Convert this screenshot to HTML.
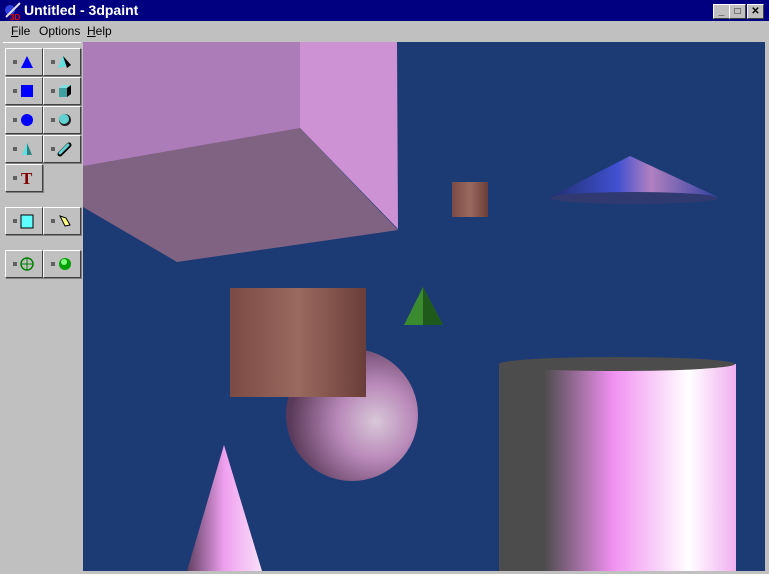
<!DOCTYPE html>
<html><head><style>
body{margin:0;width:769px;height:574px;overflow:hidden;background:#c0c0c0;font-family:"Liberation Sans",sans-serif;position:relative}
.title{position:absolute;left:0;top:0;width:769px;height:21px;background:#000080;color:#fff;font-weight:bold;font-size:14px}
.title span{position:absolute;left:24px;top:2px}
.wb{position:absolute;top:4px;width:15px;height:13px;background:#c0c0c0;border:1px solid;border-color:#fff #404040 #404040 #fff;font-size:10px;color:#000;text-align:center;line-height:13px;font-weight:bold}
.menu{position:absolute;top:21px;left:0;width:769px;height:20px;font-size:12px}
.menu span{position:absolute;top:3px}
.btn{position:absolute;width:36px;height:26px;border:1px solid;border-color:#fff #404040 #404040 #fff;box-shadow:1px 1px 0 #808080}
.btn i{position:absolute;left:7px;top:11px;width:4px;height:4px;background:#606060}
.btn svg{position:absolute;left:13px;top:4px}
</style></head><body>
<div class="title"><svg width="20" height="20" style="position:absolute;left:2px;top:1px"><circle cx="8" cy="9" r="5" fill="#3040e0"/><line x1="4" y1="16" x2="18" y2="2" stroke="#ddd" stroke-width="2"/><text x="8" y="19" font-size="8" fill="#e00" font-weight="bold">3D</text></svg><span>Untitled - 3dpaint</span>
<div class="wb" style="left:713px">_</div><div class="wb" style="left:729px">□</div><div class="wb" style="left:747px">✕</div></div>
<div class="menu"><span style="left:11px"><u>F</u>ile</span><span style="left:39px">Options</span><span style="left:87px"><u>H</u>elp</span></div>
<div style="position:absolute;left:3px;top:42px;width:78px;height:530px;border-top:1px solid #fff"></div>

<div class="btn" style="left:5px;top:48px"><i></i><svg width="20" height="20"><polygon points="8,3 14,15 2,15" fill="#0000ff"/></svg></div>
<div class="btn" style="left:43px;top:48px"><i></i><svg width="20" height="20"><polygon points="6,3 14,12 1,15" fill="#60e0e0"/><polygon points="6,3 14,12 10,15" fill="#000"/></svg></div>
<div class="btn" style="left:5px;top:77px"><i></i><svg width="20" height="20"><rect x="2" y="3" width="12" height="12" fill="#0000ff"/></svg></div>
<div class="btn" style="left:43px;top:77px"><i></i><svg width="20" height="20"><polygon points="2,6 10,6 10,15 2,15" fill="#40a0a0"/><polygon points="2,6 6,3 14,3 10,6" fill="#80e0e0"/><polygon points="10,6 14,3 14,12 10,15" fill="#000"/></svg></div>
<div class="btn" style="left:5px;top:106px"><i></i><svg width="20" height="20"><circle cx="8" cy="9" r="6" fill="#0000ff"/></svg></div>
<div class="btn" style="left:43px;top:106px"><i></i><svg width="20" height="20"><circle cx="8" cy="9" r="6" fill="#202020"/><circle cx="7" cy="8" r="5" fill="#60d0d0"/></svg></div>
<div class="btn" style="left:5px;top:135px"><i></i><svg width="20" height="20"><polygon points="8,3 13,15 3,15" fill="#60e0e0"/><polygon points="8,3 8,15 13,15" fill="#308080"/></svg></div>
<div class="btn" style="left:43px;top:135px"><i></i><svg width="20" height="20"><line x1="3" y1="14" x2="12" y2="5" stroke="#000" stroke-width="5" stroke-linecap="round"/><line x1="3" y1="13" x2="11" y2="5" stroke="#60d0d0" stroke-width="3" stroke-linecap="round"/></svg></div>
<div class="btn" style="left:5px;top:164px"><i></i><svg width="20" height="20"><text x="2" y="15" font-family="Liberation Serif" font-weight="bold" font-size="17" fill="#800000">T</text></svg></div>
<div class="btn" style="left:5px;top:207px"><i></i><svg width="20" height="20"><rect x="2" y="3" width="12" height="13" fill="#60ffff" stroke="#000" stroke-width="1"/></svg></div>
<div class="btn" style="left:43px;top:207px"><i></i><svg width="20" height="20"><polygon points="3,4 9,6 13,13 8,14" fill="#ffff80" stroke="#000"/></svg></div>
<div class="btn" style="left:5px;top:250px"><i></i><svg width="20" height="20"><circle cx="8" cy="9" r="6" fill="none" stroke="#008000" stroke-width="1.5"/><line x1="2" y1="9" x2="14" y2="9" stroke="#008000"/><line x1="8" y1="3" x2="8" y2="15" stroke="#008000"/></svg></div>
<div class="btn" style="left:43px;top:250px"><i></i><svg width="20" height="20"><circle cx="8" cy="9" r="6" fill="#00a000"/><circle cx="7" cy="7" r="3" fill="#80ff80"/></svg></div>

<svg style="position:absolute;left:82px;top:41px" width="683" height="530">
<defs>
<linearGradient id="cyl" x1="0" x2="1"><stop offset="0" stop-color="#4c4c4c"/><stop offset="0.19" stop-color="#4c4c4c"/><stop offset="0.48" stop-color="#f090f0"/><stop offset="0.8" stop-color="#ffffff"/><stop offset="1" stop-color="#f0b0f0"/></linearGradient>
<radialGradient id="sph" cx="0.68" cy="0.55" r="0.65"><stop offset="0" stop-color="#d8c8d8"/><stop offset="0.45" stop-color="#b888b8"/><stop offset="1" stop-color="#5a3a5a"/></radialGradient>
<linearGradient id="cone" x1="0" x2="1"><stop offset="0" stop-color="#604060"/><stop offset="0.5" stop-color="#f0a0f0"/><stop offset="1" stop-color="#f8e0f8"/></linearGradient>
<linearGradient id="disc" x1="0" x2="1"><stop offset="0" stop-color="#203070"/><stop offset="0.4" stop-color="#4050d0"/><stop offset="0.6" stop-color="#b080c0"/><stop offset="1" stop-color="#3040a0"/></linearGradient>
<linearGradient id="wood" x1="0" x2="1"><stop offset="0" stop-color="#7a4a44"/><stop offset="0.5" stop-color="#9a6a60"/><stop offset="1" stop-color="#6a3e38"/></linearGradient>
</defs>
<rect x="1" y="1" width="682" height="529" fill="#1c3a74"/>
<rect x="1" y="1" width="217" height="127" fill="#ac7cb8"/>
<polygon points="218,1 315,1 316,188 218,87" fill="#cc92d4"/>
<polygon points="1,125 218,87 316,189 95,221 1,166" fill="#806282"/>
<rect x="370" y="141" width="36" height="35" fill="url(#wood)"/>
<polygon points="548,115 468,156 636,156" fill="url(#disc)"/>
<ellipse cx="552" cy="157" rx="84" ry="6" fill="#303a70"/>
<polygon points="341,246 322,284 361,284" fill="#3a8a30"/>
<polygon points="341,246 341,284 361,284" fill="#1f5a1a"/>
<circle cx="270" cy="374" r="66" fill="url(#sph)"/>
<rect x="148" y="247" width="136" height="109" fill="url(#wood)"/>
<polygon points="142,404 105,530 180,530" fill="url(#cone)"/>
<rect x="417" y="323" width="237" height="207" fill="url(#cyl)"/>
<ellipse cx="535" cy="323" rx="118" ry="7" fill="#4c4c4c"/>
</svg>
</body></html>
